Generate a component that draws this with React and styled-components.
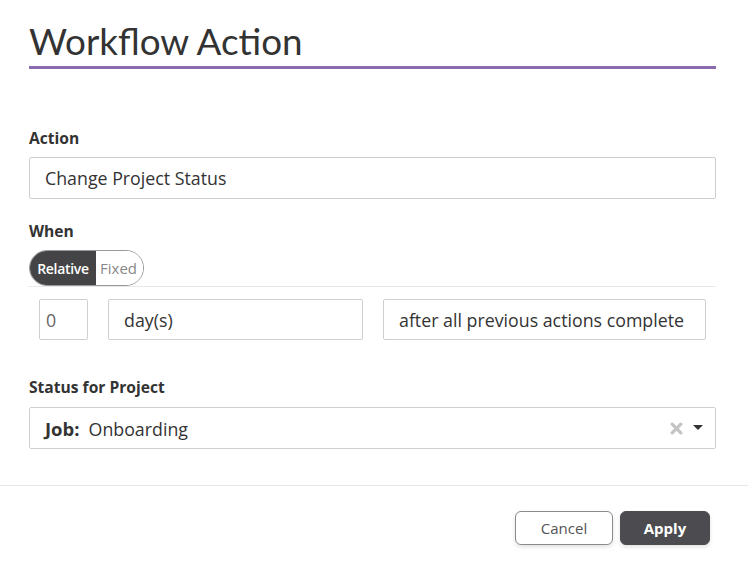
import styled, { createGlobalStyle } from 'styled-components';

const GlobalStyle = createGlobalStyle`
  html, body {
    margin: 0;
    padding: 0;
    background: #ffffff;
  }
  * {
    box-sizing: border-box;
  }
`;

const Modal = styled.div`
  width: 748px;
  height: 567px;
  background: #fff;
  display: flex;
  flex-direction: column;
  font-family: 'Open Sans', 'Liberation Sans', sans-serif;
  color: #333;
`;

const Header = styled.div`
  padding: 18px 32px 0 29px;
`;

const Title = styled.h1`
  margin: 0;
  font-family: Lato, 'Open Sans', sans-serif;
  font-size: 36.8px;
  font-weight: 400;
  line-height: 46px;
  color: #333;
  padding-bottom: 2px;
  border-bottom: 3px solid #8a6cae;
`;

const Body = styled.div`
  flex: 1;
  padding: 59px 32px 0 29px;
  border-bottom: 1px solid #e6e6e6;
`;

const Field = styled.div`
  margin-bottom: ${(p) => p.gap || 0}px;
`;

const Label = styled.div`
  font-size: 15.6px;
  font-weight: 700;
  line-height: 20px;
  margin-bottom: ${(p) => p.gap || 9}px;
  color: #333;
`;

const TextBox = styled.div`
  height: ${(p) => p.h || 42}px;
  width: ${(p) => (p.w ? `${p.w}px` : '100%')};
  border: 1px solid #cfcfcf;
  border-radius: 2px;
  display: flex;
  align-items: center;
  padding-left: ${(p) => p.pad || 15}px;
  font-size: 17.8px;
  color: ${(p) => (p.muted ? '#666' : '#333')};
  background: #fff;
`;

const Toggle = styled.div`
  display: inline-flex;
  height: 36px;
  border: 1px solid #999;
  border-radius: 18px;
  overflow: hidden;
`;

const ToggleOption = styled.span`
  display: flex;
  align-items: center;
  justify-content: center;
  width: ${(p) => (p.active ? 66 : 47)}px;
  font-size: ${(p) => (p.active ? 14 : 15)}px;
  letter-spacing: ${(p) => (p.active ? -0.3 : 0)}px;
  background: ${(p) => (p.active ? '#444446' : '#fff')};
  color: ${(p) => (p.active ? '#fff' : '#888')};
  font-weight: ${(p) => (p.active ? 600 : 400)};
  padding-right: ${(p) => (p.active ? 0 : 2)}px;
`;

const Divider = styled.div`
  border-top: 1px solid #e8e8e8;
  margin-left: -1px;
`;

const TimingRow = styled.div`
  display: flex;
  align-items: center;
  gap: 20px;
  padding: 12px 0 0 10px;
`;

const Select = styled.div`
  height: 42px;
  border: 1px solid #cfcfcf;
  border-radius: 2px;
  display: flex;
  align-items: center;
  padding: 0 12px 0 15px;
  font-size: 17.8px;
`;

const SelectValue = styled.span`
  flex: 1;
  b {
    font-weight: 700;
    font-size: 18.5px;
    margin-right: 9px;
  }
`;

const SelectIcons = styled.span`
  display: flex;
  align-items: center;
  gap: 10px;
`;

const Footer = styled.div`
  height: 81px;
  display: flex;
  justify-content: flex-end;
  align-items: flex-start;
  gap: 7px;
  padding: 25px 38px 0 0;
`;

const Button = styled.button`
  height: 34px;
  width: ${(p) => p.w}px;
  border-radius: 6px;
  font-family: 'Open Sans', 'Liberation Sans', sans-serif;
  font-size: 15px;
  cursor: pointer;
  border: 1px solid ${(p) => (p.primary ? '#4b4b50' : '#8a8a8a')};
  background: ${(p) => (p.primary ? '#4b4b50' : '#fff')};
  color: ${(p) => (p.primary ? '#fff' : '#555')};
  font-weight: ${(p) => (p.primary ? 700 : 400)};
  box-shadow: 0 2px 4px rgba(0, 0, 0, 0.12);
`;

function App() {
  return (
    <>
      <GlobalStyle />
      <Modal>
        <Header>
          <Title>Workflow Action</Title>
        </Header>
        <Body>
          <Field gap={22}>
            <Label>Action</Label>
            <TextBox>Change Project Status</TextBox>
          </Field>
          <Field gap={37}>
            <Label>When</Label>
            <Toggle>
              <ToggleOption active>Relative</ToggleOption>
              <ToggleOption>Fixed</ToggleOption>
            </Toggle>
            <Divider />
            <TimingRow>
              <TextBox w={49} h={41} pad={6} muted>0</TextBox>
              <TextBox w={255} h={41}>day(s)</TextBox>
              <TextBox w={323} h={41}>after all previous actions complete</TextBox>
            </TimingRow>
          </Field>
          <Field>
            <Label gap={10}>Status for Project</Label>
            <Select>
              <SelectValue>
                <b>Job:</b>Onboarding
              </SelectValue>
              <SelectIcons>
                <svg width="13" height="13" viewBox="0 0 12 12">
                  <path d="M2 2 L10 10 M10 2 L2 10" stroke="#c4c4c4" strokeWidth="3" strokeLinecap="round" />
                </svg>
                <svg width="10" height="6" viewBox="0 0 10 6">
                  <path d="M0 0 L10 0 L5 5 Z" fill="#333" />
                </svg>
              </SelectIcons>
            </Select>
          </Field>
        </Body>
        <Footer>
          <Button w={98}>Cancel</Button>
          <Button w={90} primary>Apply</Button>
        </Footer>
      </Modal>
    </>
  );
}

export default App;
